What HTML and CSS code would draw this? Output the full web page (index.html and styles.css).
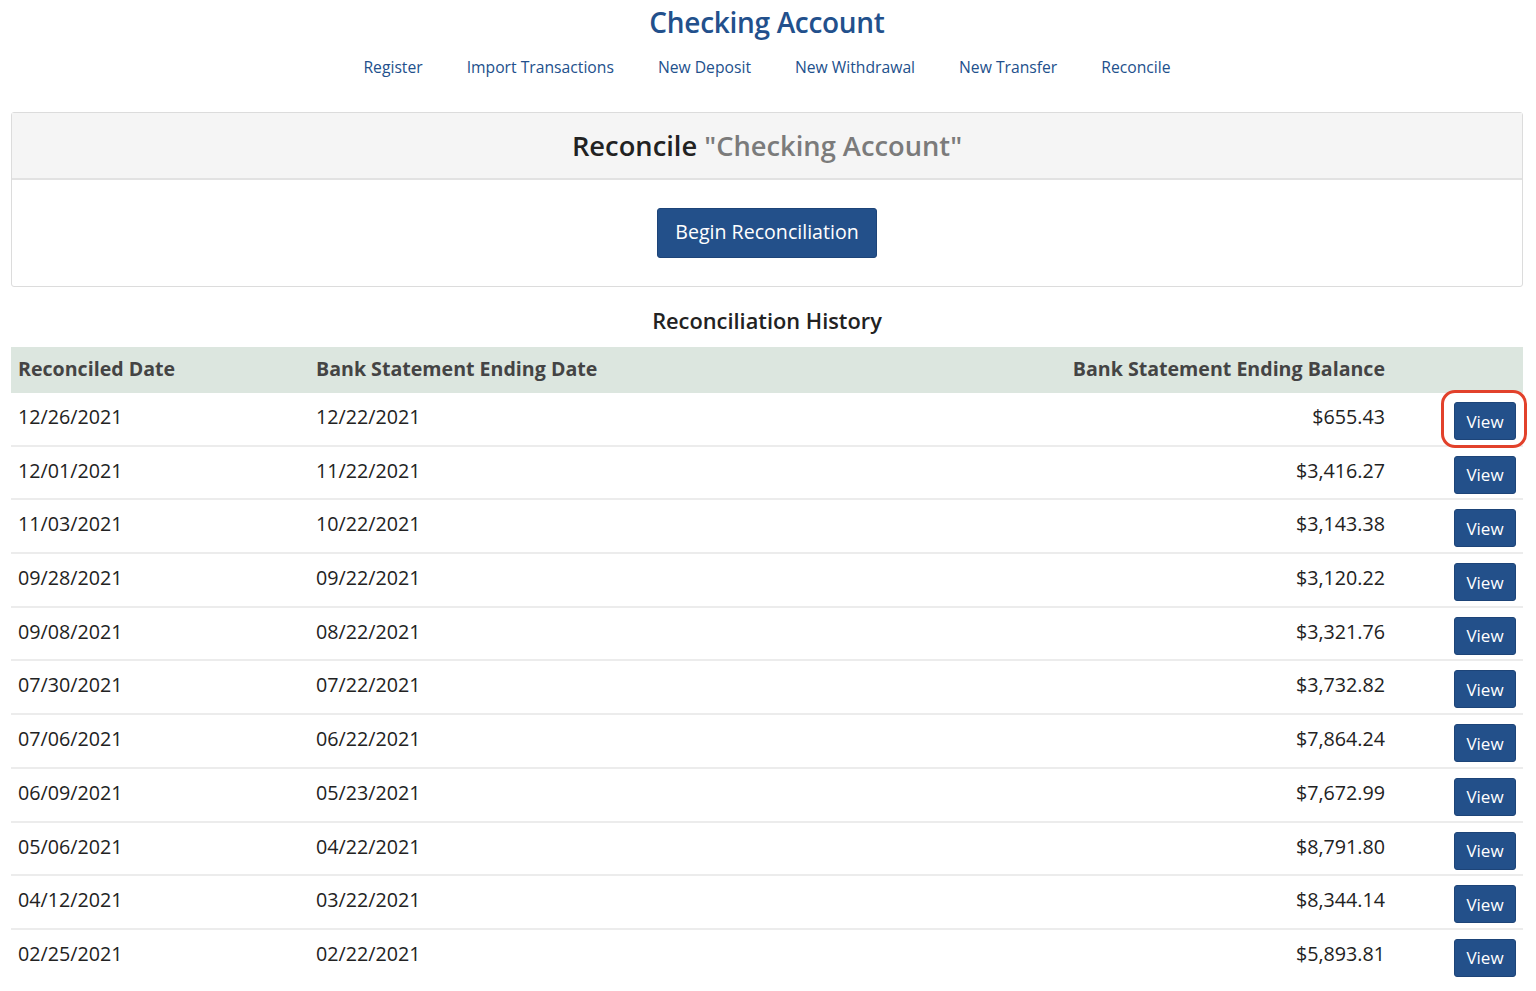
FILE: index.html
```html
<!DOCTYPE html>
<html lang="en">
<head>
    <meta charset="UTF-8">
    <meta name="viewport" content="width=device-width, initial-scale=1.0">
    <title>Reconcile - Checking Account</title>
    <link rel="stylesheet" href="styles.css">
</head>
<body>
    <h1 class="account-title">Checking Account</h1>

    <nav class="account-nav">
        <a href="#">Register</a>
        <a href="#">Import Transactions</a>
        <a href="#">New Deposit</a>
        <a href="#">New Withdrawal</a>
        <a href="#">New Transfer</a>
        <a href="#">Reconcile</a>
    </nav>

    <div class="panel">
        <div class="panel-heading">
            Reconcile <span class="panel-sub">"Checking Account"</span>
        </div>
        <div class="panel-body">
            <button class="btn-primary btn-large">Begin Reconciliation</button>
        </div>
    </div>

    <h2 class="history-title">Reconciliation History</h2>

    <table class="history-table">
        <thead>
            <tr>
                <th class="col-date">Reconciled Date</th>
                <th>Bank Statement Ending Date</th>
                <th class="col-amount">Bank Statement Ending Balance</th>
                <th class="col-action"></th>
            </tr>
        </thead>
        <tbody>
            <tr>
                <td>12/26/2021</td><td>12/22/2021</td><td class="col-amount">$655.43</td>
                <td class="col-action"><span class="highlight"><button class="btn-primary btn-view">View</button></span></td>
            </tr>
            <tr><td>12/01/2021</td><td>11/22/2021</td><td class="col-amount">$3,416.27</td><td class="col-action"><button class="btn-primary btn-view">View</button></td></tr>
            <tr><td>11/03/2021</td><td>10/22/2021</td><td class="col-amount">$3,143.38</td><td class="col-action"><button class="btn-primary btn-view">View</button></td></tr>
            <tr><td>09/28/2021</td><td>09/22/2021</td><td class="col-amount">$3,120.22</td><td class="col-action"><button class="btn-primary btn-view">View</button></td></tr>
            <tr><td>09/08/2021</td><td>08/22/2021</td><td class="col-amount">$3,321.76</td><td class="col-action"><button class="btn-primary btn-view">View</button></td></tr>
            <tr><td>07/30/2021</td><td>07/22/2021</td><td class="col-amount">$3,732.82</td><td class="col-action"><button class="btn-primary btn-view">View</button></td></tr>
            <tr><td>07/06/2021</td><td>06/22/2021</td><td class="col-amount">$7,864.24</td><td class="col-action"><button class="btn-primary btn-view">View</button></td></tr>
            <tr><td>06/09/2021</td><td>05/23/2021</td><td class="col-amount">$7,672.99</td><td class="col-action"><button class="btn-primary btn-view">View</button></td></tr>
            <tr><td>05/06/2021</td><td>04/22/2021</td><td class="col-amount">$8,791.80</td><td class="col-action"><button class="btn-primary btn-view">View</button></td></tr>
            <tr><td>04/12/2021</td><td>03/22/2021</td><td class="col-amount">$8,344.14</td><td class="col-action"><button class="btn-primary btn-view">View</button></td></tr>
            <tr><td>02/25/2021</td><td>02/22/2021</td><td class="col-amount">$5,893.81</td><td class="col-action"><button class="btn-primary btn-view">View</button></td></tr>
        </tbody>
    </table>
</body>
</html>
```

FILE: styles.css
```css
body {
    font-family: "Open Sans", "Liberation Sans", sans-serif;
    margin: 0;
    padding: 0 13px 0 11px;
    background: #fff;
    color: #222;
    overflow: hidden;
}

.account-title {
    margin: 0;
    padding-top: 3px;
    text-align: center;
    font-size: 28px;
    font-weight: 600;
    color: #22508c;
    line-height: 38px;
    letter-spacing: -0.3px;
}

.account-nav {
    display: flex;
    justify-content: center;
    gap: 44px;
    margin-top: 15px;
    font-size: 15.7px;
    line-height: 22px;
}
.account-nav a {
    color: #22508c;
    text-decoration: none;
}

.panel {
    margin-top: 34px;
    border: 1px solid #dcdcdc;
    border-radius: 3px;
}
.panel-heading {
    background: #f5f5f5;
    border-bottom: 2px solid #e2e2e2;
    height: 65px;
    line-height: 66px;
    text-align: center;
    font-size: 27.3px;
    font-weight: 600;
    color: #222;
}
.panel-sub {
    color: #7b7b7b;
}
.panel-body {
    display: flex;
    justify-content: center;
    padding: 28px 0 28px;
}

.btn-primary {
    font-family: inherit;
    background: #23508a;
    color: #fff;
    border: 1px solid #1d4478;
    border-radius: 3px;
    cursor: pointer;
}
.btn-large {
    width: 220px;
    height: 50px;
    font-size: 19.6px;
    padding: 0 0 3px;
}

.history-title {
    margin: 19px 0 11px;
    text-align: center;
    font-size: 21.8px;
    font-weight: 600;
    color: #222;
    line-height: 30px;
}

.history-table {
    width: 100%;
    border-collapse: collapse;
    font-size: 19.7px;
}
.history-table th {
    background: #dce6df;
    color: #444;
    font-weight: 700;
    text-align: left;
    vertical-align: top;
    line-height: 26px;
    padding: 9px 7px 11px;
    font-size: 19.6px;
}
.history-table td {
    padding: 11px 7px 14.7px;
    line-height: 26px;
    vertical-align: top;
    border-bottom: 2px solid #ececec;
    color: #222;
}
.history-table tbody tr:last-child td {
    border-bottom: none;
}
.history-table .col-date {
    width: 284px;
}
.history-table .col-amount {
    text-align: right;
}
.history-table .col-action {
    width: 117px;
    text-align: right;
}
.history-table td.col-action {
    padding: 9px 7px 4.7px;
    line-height: 38px;
}

.btn-view {
    width: 62px;
    height: 38px;
    font-size: 17px;
    padding: 0;
    vertical-align: top;
}

.highlight {
    position: relative;
    display: inline-block;
    vertical-align: top;
}
.highlight::after {
    content: "";
    position: absolute;
    left: -13px;
    right: -11px;
    top: -12px;
    bottom: -8px;
    border: 3px solid #e2412b;
    border-radius: 14px;
}
```
